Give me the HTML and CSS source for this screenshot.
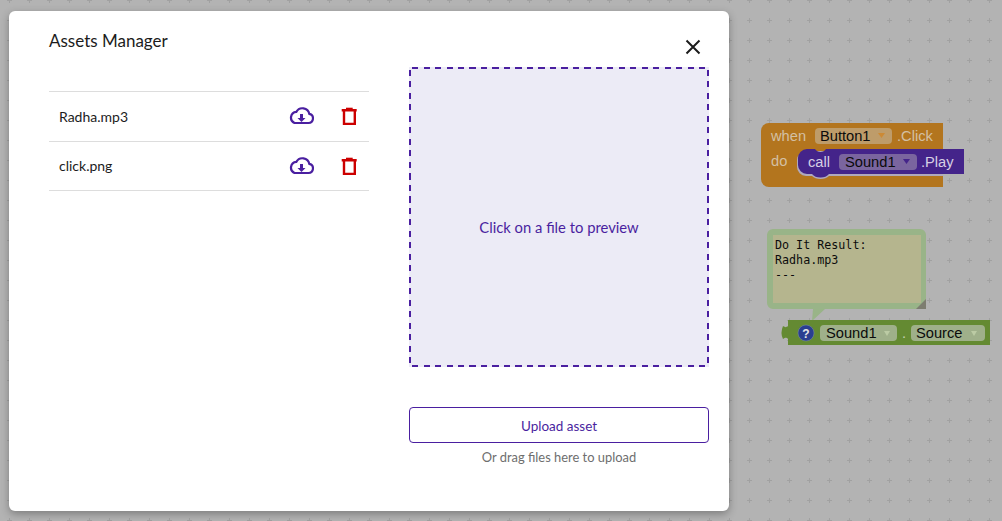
FILE: index.html
```html
<!DOCTYPE html>
<html>
<head>
    <title>Assets Manager</title>
    <link rel="stylesheet" href="styles.css">
</head>
<body>
    <svg class="blocks" width="1002" height="521" viewBox="0 0 1002 521">
        <defs>
            <pattern id="grid" x="-1" y="-10" width="20" height="20" patternUnits="userSpaceOnUse">
                <path class="grid-mark" d="M8 10h5v1H8zM10 8h1v5h-1z"/>
            </pattern>
        </defs>
        <rect width="1002" height="521" fill="url(#grid)"/>

        <!-- when Button1.Click -->
        <path class="event-block" d="M769 123H943V187H769a8 8 0 0 1-8-8V131a8 8 0 0 1 8-8z"/>
        <rect class="event-field" x="815" y="128" width="77" height="16" rx="4"/>
        <text class="block-text muted" x="771" y="141">when</text>
        <text class="block-text dark" x="820" y="141">Button1</text>
        <path class="event-arrow" d="M878 133h7l-3.500 5z"/>
        <text class="block-text muted" x="897" y="141">.Click</text>
        <text class="block-text muted" x="771" y="166">do</text>

        <!-- call Sound1.Play -->
        <path class="call-edge" d="M806 151H943V176H829q-3 3-8.500 3t-8.500-3H806a9 9 0 0 1-9-9V160a9 9 0 0 1 9-9z"/>
        <path class="call-block" d="M807 149h8q2 3 5.500 3t5.500-3H964V174H829q-3 3.500-8.500 3.500t-8.500-3.500H807a9 9 0 0 1-9-9V158a9 9 0 0 1 9-9z"/>
        <rect class="call-field" x="839" y="154" width="78" height="16" rx="4"/>
        <text class="block-text light" x="808" y="167">call</text>
        <text class="block-text dark" x="845" y="167">Sound1</text>
        <path class="call-arrow" d="M903 159h7l-3.500 5z"/>
        <text class="block-text light" x="921" y="167">.Play</text>

        <!-- Do It bubble -->
        <path class="bubble" d="M773 229H920a6 6 0 0 1 6 6V303a6 6 0 0 1-6 6H825L812 321L813 309H773a6 6 0 0 1-6-6V235a6 6 0 0 1 6-6z"/>
        <rect class="bubble-note" x="773" y="235" width="148" height="68"/>
        <path class="bubble-grip" d="M926 299V309H916z"/>
        <text class="note-text" x="775" y="249">Do It Result:</text>
        <text class="note-text" x="775" y="264">Radha.mp3</text>
        <text class="note-text" x="775" y="279">---</text>

        <!-- Sound1.Source -->
        <path class="getter-block" d="M788 320H990V345H788V339c-2-2-3-1-5 0q-3-6 0-13c2 1 3 2 5 0z"/>
        <circle class="warn-circle" cx="806" cy="333" r="8"/>
        <text class="warn-mark" x="806" y="337.500">?</text>
        <rect class="getter-field" x="820" y="325" width="77" height="16" rx="4"/>
        <text class="block-text dark" x="826" y="338">Sound1</text>
        <path class="getter-arrow" d="M884 331h6l-3 5z"/>
        <text class="block-text muted-green" x="902" y="338">.</text>
        <rect class="getter-field" x="911" y="325" width="74" height="16" rx="4"/>
        <text class="block-text dark" x="916" y="338">Source</text>
        <path class="getter-arrow" d="M971 331h6l-3 5z"/>
    </svg>

    <div class="overlay">
        <div class="modal">
            <div class="assets-pane">
                <h2>Assets Manager</h2>
                <ul class="asset-list">
                    <li class="asset-row">
                        <span class="asset-name">Radha.mp3</span>
                        <svg class="icon-cloud" width="26" height="20" viewBox="0 0 26 20"><path class="cloud-line" d="M6.500 17H20.500a4.600 4.600 0 0 0 .8-9.100a7 7 0 0 0-13-2a5.800 5.800 0 0 0-1.800 11.100z"/><path class="cloud-arrow" d="M12 8h3v4h2.500l-4 4-4-4H12z"/></svg>
                        <svg class="icon-trash" width="16" height="20" viewBox="0 0 16 20"><path class="trash-line" d="M0.700 4.300H15.700M3 4.300V17.900H13.800V4.300"/><path class="trash-lid" d="M5 1.700h6.700V3H5z"/></svg>
                    </li>
                    <li class="asset-row">
                        <span class="asset-name">click.png</span>
                        <svg class="icon-cloud" width="26" height="20" viewBox="0 0 26 20"><path class="cloud-line" d="M6.500 17H20.500a4.600 4.600 0 0 0 .8-9.100a7 7 0 0 0-13-2a5.800 5.800 0 0 0-1.800 11.100z"/><path class="cloud-arrow" d="M12 8h3v4h2.500l-4 4-4-4H12z"/></svg>
                        <svg class="icon-trash" width="16" height="20" viewBox="0 0 16 20"><path class="trash-line" d="M0.700 4.300H15.700M3 4.300V17.900H13.800V4.300"/><path class="trash-lid" d="M5 1.700h6.700V3H5z"/></svg>
                    </li>
                </ul>
            </div>
            <div class="preview-pane">
                <button class="close-btn" aria-label="Close">
                    <svg width="16" height="16" viewBox="0 0 16 16"><path class="close-line" d="M1.500 1.500L14.500 14.500M14.500 1.500L1.500 14.500"/></svg>
                </button>
                <div class="preview-box">Click on a file to preview</div>
                <button class="upload-btn">Upload asset</button>
                <p class="upload-hint">Or drag files here to upload</p>
            </div>
        </div>
    </div>
</body>
</html>
```

FILE: styles.css
```css
:root {
    --purple: #4a1fa0;
    --red: #cc0000;
    --line: #dddddd;
    --dash-x: repeating-linear-gradient(90deg, var(--purple) 3px 9px, transparent 9px 14.500px);
    --dash-y: repeating-linear-gradient(180deg, var(--purple) 3px 9px, transparent 9px 14.500px);
}

* {
    box-sizing: border-box;
    margin: 0;
    padding: 0;
}

html, body {
    height: 521px;
    overflow: hidden;
}

body {
    font-family: "Lato", "Open Sans", sans-serif;
    color: #1c1c1c;
    background-color: #b3b3b3;
}

.blocks {
    position: absolute;
    left: 0;
    top: 0;
}

.grid-mark { fill: #a1a1a1; }

.block-text {
    font-family: "Liberation Sans", Arial, sans-serif;
    font-size: 14.670px;
}

.dark { fill: #0b0b0b; }
.muted { fill: #d3c0a4; }
.light { fill: #d6cfe4; }
.muted-green { fill: #c5d2b2; }

.event-block { fill: #b3751e; }
.event-field { fill: #be9c6a; }
.event-arrow { fill: #cc8a35; }

.call-edge { fill: #b0a9bd; }
.call-block { fill: #44248a; }
.call-field { fill: #7a659f; }
.call-arrow { fill: #44248a; }

.bubble { fill: #99b488; }
.bubble-note { fill: #b5b58e; }
.bubble-grip { fill: #7d7d70; }
.note-text {
    font-family: "DejaVu Sans Mono", monospace;
    font-size: 11.700px;
    fill: #0c0c0c;
}

.getter-block { fill: #648a32; }
.getter-field { fill: #9fb08a; }
.getter-arrow { fill: #bccba4; }
.warn-circle {
    fill: #2a3e90;
    stroke: #7f8fb0;
    stroke-width: 0.500;
}
.warn-mark {
    font-family: "Liberation Sans", Arial, sans-serif;
    font-size: 12px;
    font-weight: bold;
    text-anchor: middle;
    fill: #e6e6e6;
}

.overlay {
    position: absolute;
    left: 9px;
    top: 11px;
}

.modal {
    width: 720px;
    height: 500px;
    display: flex;
    gap: 40px;
    padding: 0 20px 0 40px;
    background-color: #ffffff;
    border-radius: 6px;
    box-shadow: 0 3px 8px rgba(0, 0, 0, 0.3);
}

.assets-pane {
    width: 320px;
}

.assets-pane h2 {
    margin-top: 19px;
    font-size: 17px;
    font-weight: 400;
    line-height: 21px;
}

.asset-list {
    list-style: none;
    margin-top: 40px;
    border-top: 1px solid var(--line);
}

.asset-row {
    height: 49.600px;
    display: flex;
    align-items: center;
    padding-left: 10px;
    border-bottom: 1px solid var(--line);
}

.asset-name {
    flex: 1;
    font-size: 14px;
}

.icon-cloud {
    margin-right: 27px;
}

.icon-trash {
    margin-right: 12px;
}

.cloud-line {
    fill: none;
    stroke: var(--purple);
    stroke-width: 2.200;
}

.cloud-arrow {
    fill: var(--purple);
}

.trash-line {
    fill: none;
    stroke: var(--red);
    stroke-width: 2.400;
}

.trash-lid {
    fill: var(--red);
}

.preview-pane {
    width: 300px;
    position: relative;
    padding-top: 56px;
}

.close-btn {
    position: absolute;
    right: 8px;
    top: 28px;
    width: 16px;
    height: 16px;
    border: none;
    background: none;
}

.close-line {
    fill: none;
    stroke: #1c1c1c;
    stroke-width: 2;
}

/* drawn with gradients, a dashed border gives a shorter dash */
.preview-box {
    height: 300px;
    display: flex;
    align-items: center;
    justify-content: center;
    padding-top: 20px;
    font-size: 14.800px;
    color: var(--purple);
    background-color: #ecebf6;
    background-image: var(--dash-x), var(--dash-x), var(--dash-y), var(--dash-y);
    background-size: 100% 2px, 100% 2px, 2px 100%, 2px 100%;
    background-position: 0 0, 0 100%, 0 0, 100% 0;
    background-repeat: no-repeat;
}

.upload-btn {
    display: block;
    width: 100%;
    height: 36px;
    margin-top: 40px;
    padding-top: 2px;
    font-family: inherit;
    font-size: 13.500px;
    color: var(--purple);
    background-color: #ffffff;
    border: 1px solid var(--purple);
    border-radius: 4px;
}

.upload-hint {
    margin-top: 6px;
    font-size: 12.900px;
    line-height: 16px;
    text-align: center;
    color: #6e6e6e;
}
```
